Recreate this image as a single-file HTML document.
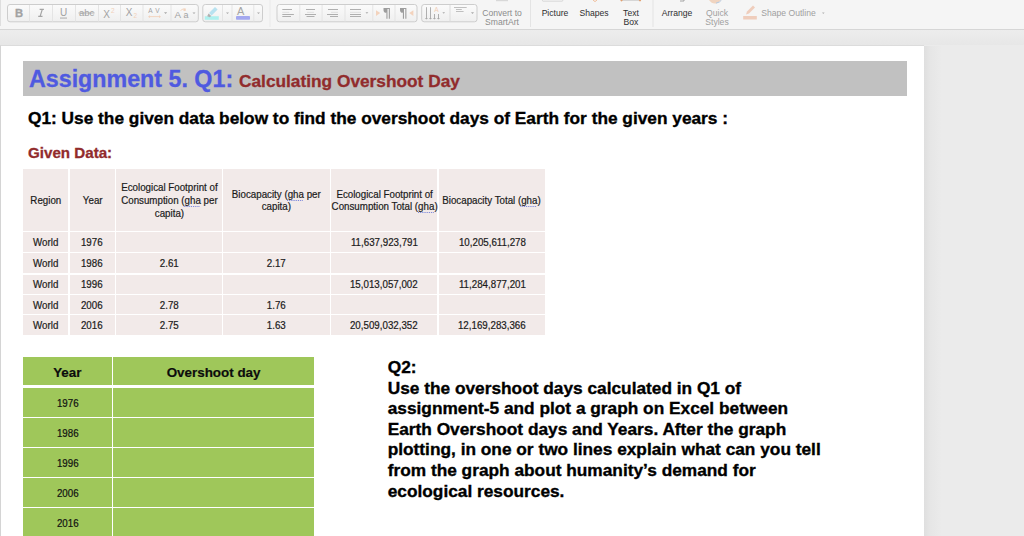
<!DOCTYPE html>
<html><head><meta charset="utf-8">
<style>
*{margin:0;padding:0;box-sizing:border-box}
html,body{width:1024px;height:536px;overflow:hidden;background:#ebebeb;font-family:"Liberation Sans",sans-serif}
.abs{position:absolute}
#tb{position:absolute;left:0;top:0;width:1024px;height:30px;background:#f5f5f5;border-bottom:1px solid #d2d2d2}
#page{position:absolute;left:0px;top:45px;width:924px;height:500px;background:#fff;border-left:1px solid #d4d4d4;border-top:1px solid #dcdcdc}
#shadow{position:absolute;left:924px;top:46px;width:18px;height:500px;background:linear-gradient(to right,#dfdfdf,#e6e6e6 35%,#ebebeb)}
.t{position:absolute;white-space:nowrap;line-height:1}
#h1bar{position:absolute;left:23px;top:61px;width:884px;height:35px;background:#c1c1c1}
.blue{color:#4f5ae0;-webkit-text-stroke:0.3px #4f5ae0}
.red{color:#912b2c;-webkit-text-stroke:0.3px #912b2c}
.pt td{background:#f2e9e8}
.grp{position:absolute;top:4px;height:18px;border:1px solid #cfcfcf;border-radius:3px;background:linear-gradient(#f9f9f9,#f0f0f0)}
.sep{position:absolute;top:0;width:1px;height:16px;background:#dcdcdc}
.pc{position:absolute;white-space:nowrap;background:#f2eae9;display:flex;align-items:center;justify-content:center;text-align:center;font-size:9.8px;line-height:12.6px;color:#1a1a1a}
.pc span{-webkit-text-stroke:0.2px #1a1a1a;display:inline-block;font-size:10.6px;transform:scaleX(0.92);padding-top:1px}
.pc u{text-decoration:underline dotted #6b78d8;text-decoration-thickness:1px;text-underline-offset:1.5px;text-decoration-skip-ink:none}
.gc{position:absolute;background:#9fc75a;display:flex;align-items:center;justify-content:center;font-size:9.8px;color:#111}
.gc span{-webkit-text-stroke:0.2px #111;display:inline-block;font-size:10.6px;transform:scaleX(0.92);padding-top:1px}
.gh span{font-size:13.4px;font-weight:bold;color:#0c0c0c;transform:none;padding-top:3px}
.q2{-webkit-text-stroke:0.35px #000;position:absolute;left:387.7px;top:357px;font-size:17.3px;line-height:20.6px;font-weight:bold;color:#000;white-space:nowrap}
</style></head><body>
<svg class="abs" style="left:0;top:0" width="1024" height="30" viewBox="0 0 1024 30" font-family="Liberation Sans, sans-serif">
<defs>
<linearGradient id="bg" x1="0" y1="0" x2="0" y2="1"><stop offset="0" stop-color="#fbfbfb"/><stop offset="1" stop-color="#efefef"/></linearGradient>
</defs>
<rect x="0" y="0" width="1024" height="29" fill="#f5f5f5"/>
<rect x="0" y="29" width="1024" height="1" fill="#d6d6d6"/>
<rect x="0" y="0" width="1" height="26" fill="#dedede"/>
<!-- group 1 -->
<rect x="7.5" y="4.5" width="190.8" height="17.3" rx="2.5" fill="url(#bg)" stroke="#cdcdcd" stroke-width="1"/>
<g fill="#e4e4e4">
<rect x="29" y="5" width="1" height="16.5"/><rect x="52" y="5" width="1" height="16.5"/><rect x="75" y="5" width="1" height="16.5"/><rect x="98" y="5" width="1" height="16.5"/><rect x="120" y="5" width="1" height="16.5"/><rect x="142.5" y="5" width="1" height="16.5"/><rect x="170.5" y="5" width="1" height="16.5"/>
</g>
<g fill="#a2a2a2" font-size="11">
<text x="15" y="16.9" font-weight="bold" font-size="11.2" stroke="#a2a2a2" stroke-width="0.3">B</text>
<path d="M39.6 9.4h4.3 M38.2 16.4h4.3 M42.3 9.4 l-2.2 7" stroke="#a4a4a4" stroke-width="1.2" fill="none"/>
<text x="60" y="15.8" font-size="10">U</text>
<rect x="60" y="17.6" width="7" height="0.9"/>
<text x="79" y="15.8" font-size="9.5">abc</text>
<rect x="78.5" y="12.6" width="16" height="0.8"/>
<text x="103.2" y="17.6" font-size="10">X</text>
<text x="125.8" y="15.7" font-size="10">X</text>
<text x="148.3" y="12.8" font-size="6.5" letter-spacing="0.6">A V</text>
<text x="174.6" y="17.6" font-size="9.8">A</text>
<text x="183.6" y="17.6" font-size="9">a</text>
</g>
<g fill="#f2d2bb" font-size="6.5">
<text x="111" y="12.8">2</text>
<text x="133.5" y="17.6">2</text>
<rect x="149" y="16.2" width="11" height="0.9"/>
<path d="M148 16.65 l2 -1.3 v2.6z M161 16.65 l-2 -1.3 v2.6z"/>
<path d="M180.5 10.5 q2.5 -2.2 5 -1.6" stroke="#f2d2bb" stroke-width="0.9" fill="none"/>
<rect x="183.5" y="8.8" width="2.2" height="2.2"/>
</g>
<g fill="#a8a8a8">
<path d="M164 12.2h3.2l-1.6 1.8z"/>
<path d="M192.5 12.4h3l-1.5 1.7z"/>
</g>
<!-- group 2 -->
<rect x="202.8" y="4.5" width="59.7" height="17.3" rx="2.5" fill="url(#bg)" stroke="#cdcdcd"/>
<g fill="#e4e4e4"><rect x="222" y="5" width="1" height="16.5"/><rect x="231.5" y="5" width="1" height="16.5"/><rect x="253.3" y="5" width="1" height="16.5"/></g>
<rect x="204.8" y="16.2" width="14" height="3.6" fill="#aef0ee"/>
<path d="M209 13 l6 -6 l2.6 2.6 l-6 6z" fill="#b8e2f0"/>
<path d="M208.6 13.4 l2.6 2.6 l-1.4 1.2 l-2.6 -1z" fill="#b0b0b0"/>
<path d="M226 12.4h3l-1.5 1.7z" fill="#a8a8a8"/>
<text x="237" y="15.2" font-size="11" fill="#a4a4a4">A</text>
<rect x="236" y="16" width="14" height="3.8" rx="0.8" fill="#a3a8ef"/>
<path d="M257 12.4h3l-1.5 1.7z" fill="#a8a8a8"/>
<rect x="269.5" y="0" width="1" height="27" fill="#eaeaea"/>
<!-- group 3 -->
<rect x="277" y="4.5" width="140" height="17.3" rx="2.5" fill="url(#bg)" stroke="#cdcdcd"/>
<g fill="#e4e4e4"><rect x="299.3" y="5" width="1" height="16.5"/><rect x="321.6" y="5" width="1" height="16.5"/><rect x="344.5" y="5" width="1" height="16.5"/><rect x="372.3" y="5" width="1" height="16.5"/><rect x="394.5" y="5" width="1" height="16.5"/></g>
<g fill="#a8a8a8">
<rect x="282.3" y="9" width="9.7" height="0.9"/><rect x="282.3" y="11.9" width="7" height="0.6" fill="#d0d0d0"/><rect x="282.3" y="14" width="11.6" height="0.9"/><rect x="282.3" y="16.1" width="8.7" height="0.9"/>
<rect x="306" y="9" width="9" height="0.9"/><rect x="307" y="11.9" width="7" height="0.6" fill="#d0d0d0"/><rect x="305" y="14" width="11" height="0.9"/><rect x="306.5" y="16.1" width="8" height="0.9"/>
<rect x="328" y="9" width="10" height="0.9"/><rect x="331" y="11.9" width="7" height="0.6" fill="#d0d0d0"/><rect x="327" y="14" width="11" height="0.9"/><rect x="330" y="16.1" width="8" height="0.9"/>
<rect x="350" y="9" width="11" height="0.9"/><rect x="350" y="11.9" width="11" height="0.6" fill="#d0d0d0"/><rect x="350" y="14" width="11" height="0.9"/><rect x="350" y="16.1" width="11" height="0.9"/>
<path d="M365.5 12.2h2.8l-1.4 1.6z"/>
<path d="M383.5 8 h6.4 v10.8 h-1.1 v-9.8 h-1.3 v9.8 h-1.1 v-6.2 a2.3 2.3 0 0 1 -2.9 -2.3z" fill="#9d9d9d"/>
<path d="M400 8 h6.4 v10.8 h-1.1 v-9.8 h-1.3 v9.8 h-1.1 v-6.2 a2.3 2.3 0 0 1 -2.9 -2.3z" fill="#9d9d9d"/>
</g>
<path d="M376 10.2 l4.2 2.9 l-4.2 2.9z" fill="#f3d3bd"/>
<path d="M413.4 10.2 l-4.2 2.9 l4.2 2.9z" fill="#f3d3bd"/>
<!-- group 4 -->
<rect x="421.7" y="4.5" width="55.3" height="17.3" rx="2.5" fill="url(#bg)" stroke="#cdcdcd"/>
<rect x="449.5" y="5" width="1" height="16.5" fill="#dcdcdc"/>
<g fill="#a8a8a8">
<rect x="426" y="7.2" width="0.9" height="11.5"/><rect x="430" y="7.2" width="0.9" height="11.5"/><rect x="434" y="14" width="0.9" height="4.7"/><rect x="438" y="14" width="0.9" height="4.7"/>
<path d="M424.9 18 h3.1 l-1.55 1.6z M428.9 18 h3.1 l-1.55 1.6z M432.9 18 h3.1 l-1.55 1.6z M436.9 18 h3.1 l-1.55 1.6z"/>
<path d="M442.4 12.2h2.6l-1.3 1.6z"/>
<rect x="454" y="7.1" width="12.7" height="0.7"/><rect x="456" y="9.1" width="5.8" height="0.7"/><rect x="456" y="11.1" width="7.6" height="0.7"/>
<path d="M471 12.2h3l-1.5 1.7z"/>
</g>
<text x="436.5" y="11.9" font-size="6.5" fill="#f0cdb5" text-anchor="middle">A</text>
<g fill="#8c8c8c" font-size="8.6" text-anchor="middle">
<text x="502" y="15.8">Convert to</text>
<text x="502" y="24.6">SmartArt</text>
</g>
<rect x="496" y="0" width="12" height="1.2" fill="#d8d8d8"/>
<rect x="530" y="0" width="1" height="27" fill="#e4e4e4"/>
<g fill="#2e2e2e" font-size="8.6" text-anchor="middle">
<text x="555" y="15.6">Picture</text>
<text x="594" y="15.6">Shapes</text>
<text x="631" y="15.6">Text</text>
<text x="631" y="24.6">Box</text>
<text x="677" y="15.6">Arrange</text>
</g>
<path d="M542.5 0 v0.6 q0 0.6 0.6 0.6 h19 q0.6 0 0.6 -0.6 v-0.6" fill="none" stroke="#cfcfcf" stroke-width="0.8"/>
<path d="M593 0 l2 1.6 l2 -1.6" fill="none" stroke="#f0b890" stroke-width="0.9"/>
<rect x="621" y="0" width="19" height="0.8" fill="#cfcfcf"/>
<circle cx="621.5" cy="0.3" r="1.1" fill="#e0a070"/><circle cx="640" cy="0.3" r="1.1" fill="#e0a070"/>
<rect x="652.5" y="0" width="1" height="27" fill="#e4e4e4"/>
<path d="M680 1 h4 v-1.2" fill="none" stroke="#909090" stroke-width="0.8"/>
<path d="M709 0 q3 4.2 7 3.4 q3 -1 5 -3.4z" fill="#f0d4c0"/>
<path d="M716 3.2 q4 -0.8 5.5 -3.2" fill="none" stroke="#b4c8e0" stroke-width="1"/>
<g fill="#a0a0a0" font-size="8.6" text-anchor="middle">
<text x="717" y="15.6">Quick</text>
<text x="717" y="24.6">Styles</text>
<text x="788.5" y="15.6" text-anchor="middle">Shape Outline</text>
</g>
<rect x="743.2" y="16" width="13.6" height="3.5" fill="#efcdbc"/>
<path d="M746 14.5 l1 -3 l6 -6 l2 2 l-6 6z" fill="#efcdbc"/>
<path d="M822 12.6h2.6l-1.3 1.5z" fill="#b0b0b0"/>
</svg>

<div class="abs" style="left:0;top:30px;width:1024px;height:15px;background:linear-gradient(#ededed,#e7e7e7)"></div>
<div id="shadow"></div>
<div id="page"></div>

<div id="h1bar"></div>
<div class="t blue" style="left:29px;top:68px;font-size:23.25px;font-weight:bold">Assignment 5. Q1:</div>
<div class="t red" style="left:239px;top:72.5px;font-size:17.3px;font-weight:bold">Calculating Overshoot Day</div>

<div class="t" style="left:28px;top:110px;font-size:17.3px;font-weight:bold;color:#000;-webkit-text-stroke:0.35px #000">Q1: Use the given data below to find the overshoot days of Earth for the given years :</div>
<div class="t red" style="left:28px;top:145px;font-size:15.15px;font-weight:bold">Given Data:</div>

<div class="pc" style="left:23px;top:169px;width:45.2px;height:61.5px"><span>Region</span></div>
<div class="pc" style="left:69.9px;top:169px;width:44.7px;height:61.5px"><span>Year</span></div>
<div class="pc" style="left:116.4px;top:169px;width:105.5px;height:61.5px"><span>Ecological Footprint of<br>Consumption (<u>gha</u> per<br>capita)</span></div>
<div class="pc" style="left:223.4px;top:169px;width:106.3px;height:61.5px"><span>Biocapacity (<u>gha</u> per<br>capita)</span></div>
<div class="pc" style="left:331.2px;top:169px;width:106.1px;height:61.5px"><span>Ecological Footprint of<br>Consumption Total (<u>gha</u>)</span></div>
<div class="pc" style="left:439.2px;top:169px;width:105.5px;height:61.5px"><span>Biocapacity Total (<u>gha</u>)</span></div>
<div class="pc" style="left:23px;top:232.3px;width:45.2px;height:19.5px"><span>World</span></div>
<div class="pc" style="left:69.9px;top:232.3px;width:44.7px;height:19.5px"><span>1976</span></div>
<div class="pc" style="left:116.4px;top:232.3px;width:105.5px;height:19.5px"></div>
<div class="pc" style="left:223.4px;top:232.3px;width:106.3px;height:19.5px"></div>
<div class="pc" style="left:331.2px;top:232.3px;width:106.1px;height:19.5px"><span>11,637,923,791</span></div>
<div class="pc" style="left:439.2px;top:232.3px;width:105.5px;height:19.5px"><span>10,205,611,278</span></div>
<div class="pc" style="left:23px;top:253.2px;width:45.2px;height:19.8px"><span>World</span></div>
<div class="pc" style="left:69.9px;top:253.2px;width:44.7px;height:19.8px"><span>1986</span></div>
<div class="pc" style="left:116.4px;top:253.2px;width:105.5px;height:19.8px"><span>2.61</span></div>
<div class="pc" style="left:223.4px;top:253.2px;width:106.3px;height:19.8px"><span>2.17</span></div>
<div class="pc" style="left:331.2px;top:253.2px;width:106.1px;height:19.8px"></div>
<div class="pc" style="left:439.2px;top:253.2px;width:105.5px;height:19.8px"></div>
<div class="pc" style="left:23px;top:274.5px;width:45.2px;height:19.1px"><span>World</span></div>
<div class="pc" style="left:69.9px;top:274.5px;width:44.7px;height:19.1px"><span>1996</span></div>
<div class="pc" style="left:116.4px;top:274.5px;width:105.5px;height:19.1px"></div>
<div class="pc" style="left:223.4px;top:274.5px;width:106.3px;height:19.1px"></div>
<div class="pc" style="left:331.2px;top:274.5px;width:106.1px;height:19.1px"><span>15,013,057,002</span></div>
<div class="pc" style="left:439.2px;top:274.5px;width:105.5px;height:19.1px"><span>11,284,877,201</span></div>
<div class="pc" style="left:23px;top:295.1px;width:45.2px;height:18.7px"><span>World</span></div>
<div class="pc" style="left:69.9px;top:295.1px;width:44.7px;height:18.7px"><span>2006</span></div>
<div class="pc" style="left:116.4px;top:295.1px;width:105.5px;height:18.7px"><span>2.78</span></div>
<div class="pc" style="left:223.4px;top:295.1px;width:106.3px;height:18.7px"><span>1.76</span></div>
<div class="pc" style="left:331.2px;top:295.1px;width:106.1px;height:18.7px"></div>
<div class="pc" style="left:439.2px;top:295.1px;width:105.5px;height:18.7px"></div>
<div class="pc" style="left:23px;top:315.3px;width:45.2px;height:19.4px"><span>World</span></div>
<div class="pc" style="left:69.9px;top:315.3px;width:44.7px;height:19.4px"><span>2016</span></div>
<div class="pc" style="left:116.4px;top:315.3px;width:105.5px;height:19.4px"><span>2.75</span></div>
<div class="pc" style="left:223.4px;top:315.3px;width:106.3px;height:19.4px"><span>1.63</span></div>
<div class="pc" style="left:331.2px;top:315.3px;width:106.1px;height:19.4px"><span>20,509,032,352</span></div>
<div class="pc" style="left:439.2px;top:315.3px;width:105.5px;height:19.4px"><span>12,169,283,366</span></div>
<div class="gc gh" style="left:23px;top:357px;width:88.6px;height:28.3px"><span>Year</span></div>
<div class="gc gh" style="left:113.3px;top:357px;width:200.6px;height:28.3px"><span>Overshoot day</span></div>
<div class="gc" style="left:23px;top:388px;width:88.6px;height:28.8px"><span>1976</span></div>
<div class="gc" style="left:113.3px;top:388px;width:200.6px;height:28.8px"></div>
<div class="gc" style="left:23px;top:418px;width:88.6px;height:28.6px"><span>1986</span></div>
<div class="gc" style="left:113.3px;top:418px;width:200.6px;height:28.6px"></div>
<div class="gc" style="left:23px;top:448px;width:88.6px;height:28.8px"><span>1996</span></div>
<div class="gc" style="left:113.3px;top:448px;width:200.6px;height:28.8px"></div>
<div class="gc" style="left:23px;top:478px;width:88.6px;height:28.8px"><span>2006</span></div>
<div class="gc" style="left:113.3px;top:478px;width:200.6px;height:28.8px"></div>
<div class="gc" style="left:23px;top:508px;width:88.6px;height:29px"><span>2016</span></div>
<div class="gc" style="left:113.3px;top:508px;width:200.6px;height:29px"></div>
<div class="q2">Q2:<br>Use the overshoot days calculated in Q1 of<br>assignment-5 and plot a graph on Excel between<br>Earth Overshoot days and Years. After the graph<br>plotting, in one or two lines explain what can you tell<br>from the graph about humanity’s demand for<br>ecological resources.</div>
</body></html>
